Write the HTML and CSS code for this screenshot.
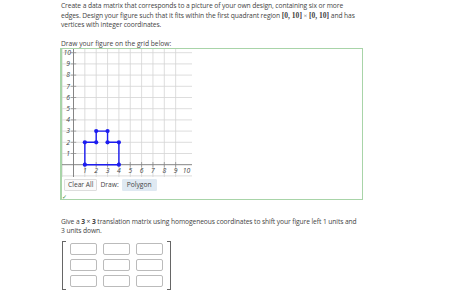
FILE: index.html
```html
<!DOCTYPE html>
<html>
<head>
<meta charset="utf-8">
<link rel="stylesheet" href="styles.css">
</head>
<body>
<div class="page">
  <p class="q">Create a data matrix that corresponds to a picture of your own design, containing six or more<br>edges. Design your figure such that it fits within the first quadrant region <span class="m">[0, 10]</span> <span class="times">×</span> <span class="m">[0, 10]</span> and has<br>vertices with integer coordinates.</p>
  <div class="label">Draw your figure on the grid below:</div>
  <div class="box">
    <svg class="board" width="130" height="128" viewBox="0 0 130 128">
      <g class="grid">
        <line x1="0.15" y1="0" x2="0.15" y2="128"/>
        <line x1="22.85" y1="0" x2="22.85" y2="128"/>
        <line x1="34.2" y1="0" x2="34.2" y2="128"/>
        <line x1="45.55" y1="0" x2="45.55" y2="128"/>
        <line x1="56.9" y1="0" x2="56.9" y2="128"/>
        <line x1="68.25" y1="0" x2="68.25" y2="128"/>
        <line x1="79.6" y1="0" x2="79.6" y2="128"/>
        <line x1="90.95" y1="0" x2="90.95" y2="128"/>
        <line x1="102.3" y1="0" x2="102.3" y2="128"/>
        <line x1="113.65" y1="0" x2="113.65" y2="128"/>
        <line x1="0" y1="3.7" x2="130" y2="3.7"/>
        <line x1="0" y1="14.9" x2="130" y2="14.9"/>
        <line x1="0" y1="26.1" x2="130" y2="26.1"/>
        <line x1="0" y1="37.3" x2="130" y2="37.3"/>
        <line x1="0" y1="48.5" x2="130" y2="48.5"/>
        <line x1="0" y1="59.7" x2="130" y2="59.7"/>
        <line x1="0" y1="70.9" x2="130" y2="70.9"/>
        <line x1="0" y1="82.1" x2="130" y2="82.1"/>
        <line x1="0" y1="93.3" x2="130" y2="93.3"/>
        <line x1="0" y1="104.5" x2="130" y2="104.5"/>
        <line x1="0" y1="126.9" x2="130" y2="126.9"/>
      </g>
      <g class="axis">
        <line x1="0" y1="115.7" x2="130" y2="115.7"/>
        <line x1="11.5" y1="0" x2="11.5" y2="128"/>
      </g>
      <g class="ticks">
        <line x1="22.85" y1="113" x2="22.85" y2="118.4"/>
        <line x1="34.2" y1="113" x2="34.2" y2="118.4"/>
        <line x1="45.55" y1="113" x2="45.55" y2="118.4"/>
        <line x1="56.9" y1="113" x2="56.9" y2="118.4"/>
        <line x1="68.25" y1="113" x2="68.25" y2="118.4"/>
        <line x1="79.6" y1="113" x2="79.6" y2="118.4"/>
        <line x1="90.95" y1="113" x2="90.95" y2="118.4"/>
        <line x1="102.3" y1="113" x2="102.3" y2="118.4"/>
        <line x1="113.65" y1="113" x2="113.65" y2="118.4"/>
        <line x1="8.8" y1="3.7" x2="14.2" y2="3.7"/>
        <line x1="8.8" y1="14.9" x2="14.2" y2="14.9"/>
        <line x1="8.8" y1="26.1" x2="14.2" y2="26.1"/>
        <line x1="8.8" y1="37.3" x2="14.2" y2="37.3"/>
        <line x1="8.8" y1="48.5" x2="14.2" y2="48.5"/>
        <line x1="8.8" y1="59.7" x2="14.2" y2="59.7"/>
        <line x1="8.8" y1="70.9" x2="14.2" y2="70.9"/>
        <line x1="8.8" y1="82.1" x2="14.2" y2="82.1"/>
        <line x1="8.8" y1="93.3" x2="14.2" y2="93.3"/>
        <line x1="8.8" y1="104.5" x2="14.2" y2="104.5"/>
      </g>
      <g class="xl">
        <text x="22.85" y="124">1</text>
        <text x="34.2" y="124">2</text>
        <text x="45.55" y="124">3</text>
        <text x="56.9" y="124">4</text>
        <text x="68.25" y="124">5</text>
        <text x="79.6" y="124">6</text>
        <text x="90.95" y="124">7</text>
        <text x="102.3" y="124">8</text>
        <text x="113.65" y="124">9</text>
        <text x="124.5" y="124">10</text>
      </g>
      <g class="yl">
        <text x="9" y="6">10</text>
        <text x="8" y="17.2">9</text>
        <text x="8" y="28.4">8</text>
        <text x="8" y="39.6">7</text>
        <text x="8" y="50.8">6</text>
        <text x="8" y="62">5</text>
        <text x="8" y="73.2">4</text>
        <text x="8" y="84.4">3</text>
        <text x="8" y="95.6">2</text>
        <text x="8" y="106.8">1</text>
      </g>
      <polygon class="shape" points="22.85,115.7 56.9,115.7 56.9,93.3 45.55,93.3 45.55,82.1 34.2,82.1 34.2,93.3 22.85,93.3"/>
      <g class="pts">
        <circle cx="22.85" cy="115.7" r="2.1"/>
        <circle cx="56.9" cy="115.7" r="2.1"/>
        <circle cx="56.9" cy="93.3" r="2.1"/>
        <circle cx="45.55" cy="93.3" r="2.1"/>
        <circle cx="45.55" cy="82.1" r="2.1"/>
        <circle cx="34.2" cy="82.1" r="2.1"/>
        <circle cx="34.2" cy="93.3" r="2.1"/>
        <circle cx="22.85" cy="93.3" r="2.1"/>
      </g>
    </svg>
    <div class="tools">
      <span class="btn">Clear All</span>
      <span class="draw">Draw:</span>
      <span class="btn active">Polygon</span>
    </div>
    <div class="check">✓</div>
  </div>
  <p class="q q2">Give a <span class="b">3</span> × <span class="b">3</span> translation matrix using homogeneous coordinates to shift your figure left 1 units and<br>3 units down.</p>
  <div class="matrix">
    <div class="cells">
      <span class="cell"></span><span class="cell"></span><span class="cell"></span>
      <span class="cell"></span><span class="cell"></span><span class="cell"></span>
      <span class="cell"></span><span class="cell"></span><span class="cell"></span>
    </div>
  </div>
</div>
</body>
</html>
```
FILE: styles.css
```css
html, body {
  margin: 0;
  padding: 0;
  background: #fff;
}
.page {
  padding: 1px 0 0 61px;
  width: 330px;
  font-family: "Open Sans", "Liberation Sans", sans-serif;
  font-size: 6.7px;
  line-height: 9.6px;
  color: #444;
}
.q {
  margin: 0;
  width: 330px;
  letter-spacing: -0.09px;
}
.m {
  font-family: "Liberation Serif", serif;
  font-weight: bold;
  font-size: 7.6px;
  letter-spacing: 0;
}
.times {
  font-family: "Liberation Serif", serif;
  font-size: 6.6px;
  color: #555;
}
.b {
  font-weight: bold;
}
.label {
  margin-top: 9px;
  height: 9px;
}
.box {
  margin-left: -1px;
  width: 300px;
  height: 150px;
  border: 1px solid #a8d4a8;
  border-left: 2px solid #a8d4a8;
  position: relative;
}
.board {
  display: block;
  margin-top: 0;
}
.grid line {
  stroke: #d4d4d4;
  stroke-width: 0.8;
}
.axis line {
  stroke: #777;
  stroke-width: 0.9;
}
.ticks line {
  stroke: #888;
  stroke-width: 0.7;
}
.xl text, .yl text {
  font-family: "Open Sans", sans-serif;
  font-style: italic;
  font-size: 6.8px;
  fill: #444;
}
.xl text {
  text-anchor: middle;
}
.yl text {
  text-anchor: end;
}
.shape {
  fill: none;
  stroke: #1c1cf0;
  stroke-width: 1.4;
}
.pts circle {
  fill: #1c1cf0;
}
.tools {
  display: flex;
  align-items: center;
  gap: 3px;
  margin: 2px 0 0 2px;
  height: 12px;
}
.btn {
  display: inline-flex;
  align-items: center;
  height: 12px;
  padding: 0 3px;
  box-sizing: border-box;
  border: 1px solid #ddd;
  border-radius: 1px;
  background: #fafafa;
}
.btn.active {
  background: #dfe9f2;
  border-color: #dfe9f2;
  padding: 0 4px;
}
.check {
  position: absolute;
  left: 0px;
  bottom: -1px;
  font-size: 6px;
  line-height: 6px;
  color: #3a8a3a;
}
.q2 {
  margin-top: 17px;
}
.matrix {
  margin-top: 5px;
  margin-left: 1px;
  width: 109px;
  height: 49px;
  box-sizing: border-box;
  border-left: 1px solid #666;
  border-right: 1px solid #666;
  position: relative;
  display: flex;
  align-items: center;
  padding-left: 7px;
}
.matrix::before, .matrix::after {
  content: "";
  position: absolute;
  left: 0;
  width: 3px;
  height: 100%;
  border-top: 1px solid #666;
  border-bottom: 1px solid #666;
  box-sizing: border-box;
}
.matrix::after {
  left: auto;
  right: 0;
}
.cells {
  display: grid;
  grid-template-columns: repeat(3, 27px);
  grid-auto-rows: 12px;
  column-gap: 6px;
  row-gap: 4px;
}
.cell {
  border: 1px solid #bbb;
  border-radius: 2px;
  background: #fff;
}
```
